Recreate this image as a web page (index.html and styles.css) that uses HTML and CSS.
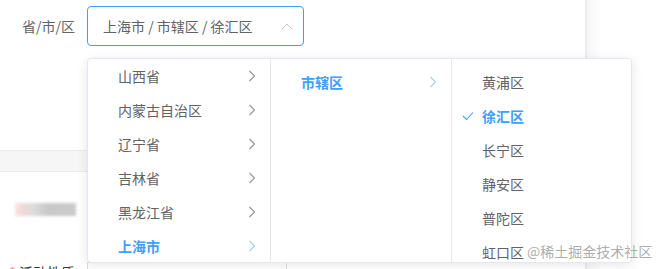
FILE: index.html
```html
<!DOCTYPE html>
<html lang="zh-CN">
<head>
<meta charset="utf-8">
<title>Cascader</title>
<link rel="stylesheet" href="styles.css">
</head>
<body>
<div class="page">
  <div class="card">
    <div class="form-row">
      <label class="form-label">省/市/区</label>
      <div class="cascader">
        <span class="cascader-value">上海市 / 市辖区 / 徐汇区</span>
        <svg class="caret" width="12" height="7" viewBox="0 0 12 7"><path d="M1 6 L6 1 L11 6" fill="none" stroke="#c0c4cc" stroke-width="1"/></svg>
      </div>
    </div>
    <div class="band"></div>
    <div class="blur-row"><span class="blur"></span></div>
    <div class="bottom-row">
      <span class="bottom-label"><span class="star">*</span> 活动性质</span>
      <div class="bottom-box"></div>
    </div>
  </div>
  <div class="shade"></div>

  <div class="dropdown">
    <ul class="menu menu-1">
      <li class="node">山西省<svg class="arrow" width="8" height="12" viewBox="0 0 8 12"><path d="M1.5 1 L6.5 6 L1.5 11" fill="none" stroke="#909399" stroke-width="1.1"/></svg></li>
      <li class="node">内蒙古自治区<svg class="arrow" width="8" height="12" viewBox="0 0 8 12"><path d="M1.5 1 L6.5 6 L1.5 11" fill="none" stroke="#909399" stroke-width="1.1"/></svg></li>
      <li class="node">辽宁省<svg class="arrow" width="8" height="12" viewBox="0 0 8 12"><path d="M1.5 1 L6.5 6 L1.5 11" fill="none" stroke="#909399" stroke-width="1.1"/></svg></li>
      <li class="node">吉林省<svg class="arrow" width="8" height="12" viewBox="0 0 8 12"><path d="M1.5 1 L6.5 6 L1.5 11" fill="none" stroke="#909399" stroke-width="1.1"/></svg></li>
      <li class="node">黑龙江省<svg class="arrow" width="8" height="12" viewBox="0 0 8 12"><path d="M1.5 1 L6.5 6 L1.5 11" fill="none" stroke="#909399" stroke-width="1.1"/></svg></li>
      <li class="node active">上海市<svg class="arrow" width="8" height="12" viewBox="0 0 8 12"><path d="M1.5 1 L6.5 6 L1.5 11" fill="none" stroke="#a0cfff" stroke-width="1.1"/></svg></li>
    </ul>
    <ul class="menu menu-2">
      <li class="node active">市辖区<svg class="arrow" width="8" height="12" viewBox="0 0 8 12"><path d="M1.5 1 L6.5 6 L1.5 11" fill="none" stroke="#a0cfff" stroke-width="1.1"/></svg></li>
    </ul>
    <ul class="menu menu-3">
      <li class="node">黄浦区</li>
      <li class="node active"><svg class="check" width="12" height="10" viewBox="0 0 12 10"><path d="M1 5 L4.5 8.5 L11 1.5" fill="none" stroke="#409eff" stroke-width="1.1"/></svg>徐汇区</li>
      <li class="node">长宁区</li>
      <li class="node">静安区</li>
      <li class="node">普陀区</li>
      <li class="node">虹口区</li>
    </ul>
  </div>
  <div class="watermark">@稀土掘金技术社区</div>
</div>
</body>
</html>
```

FILE: styles.css
```css
* { box-sizing: border-box; }
html, body {
  margin: 0;
  padding: 0;
  background: #fff;
  font-family: "Noto Sans CJK SC", "Helvetica Neue", sans-serif;
  font-size: 14px;
  color: #606266;
}
.page {
  position: relative;
  width: 660px;
  height: 269px;
  overflow: hidden;
  display: flex;
}
.card {
  width: 587px;
  height: 269px;
  border-right: 2px solid #ececec;
  display: flex;
  flex-direction: column;
  flex-shrink: 0;
}
.shade {
  width: 14px;
  height: 269px;
  background: linear-gradient(to right, #f6f6f6, #fff);
}
.form-row {
  display: flex;
  align-items: center;
  padding-top: 6px;
  height: 46px;
  flex-shrink: 0;
}
.form-label {
  width: 87px;
  text-align: right;
  padding-right: 12px;
  line-height: 40px;
}
.cascader {
  width: 217px;
  height: 40px;
  border: 1px solid #409eff;
  border-radius: 4px;
  padding: 0 15px;
  display: flex;
  align-items: center;
  justify-content: space-between;
}
.cascader-value { line-height: 38px; }
.caret { margin-right: -5px; }
.band {
  margin-top: 104px;
  height: 22px;
  flex-shrink: 0;
  background: #f6f6f6;
  border-top: 1px solid #ececec;
  border-bottom: 1px solid #ececec;
}
.blur-row {
  height: 90px;
  flex-shrink: 0;
  padding-top: 31px;
  padding-left: 15px;
}
.blur {
  display: block;
  width: 61px;
  height: 13px;
  background: linear-gradient(to right, #fbe3e3 0%, #f0d8d8 12%, #dcdcdc 30%, #c8c8c8 55%, #cacaca 100%);
  filter: blur(1.5px);
}
.bottom-row {
  display: flex;
  align-items: flex-start;
  height: 20px;
  flex-shrink: 0;
}
.bottom-label {
  width: 87px;
  text-align: right;
  padding-right: 12px;
  margin-top: 0;
  line-height: 20px;
  color: #333;
}
.star { color: #f56c6c; }
.bottom-box {
  width: 200px;
  height: 20px;
  border: 1px solid #dcdfe6;
  border-bottom: none;
}

.dropdown {
  position: absolute;
  left: 87px;
  top: 58px;
  display: flex;
  background: #fff;
  border: 1px solid #e4e7ed;
  border-radius: 4px;
  box-shadow: 0 2px 12px 0 rgba(0, 0, 0, 0.1);
  overflow: hidden;
}
.menu {
  list-style: none;
  margin: 0;
  padding: 6px 0;
  height: 203px;
  overflow: hidden;
  border-right: 1px solid #e4e7ed;
}
.menu-1 { width: 183px; padding-top: 0; }
.menu-2 { width: 181px; }
.menu-3 { width: 179px; border-right: none; }
.node {
  position: relative;
  height: 34px;
  line-height: 34px;
  padding: 0 30px 0 30px;
  color: #606266;
  white-space: nowrap;
}
.node.active {
  color: #409eff;
  font-weight: 700;
}
.arrow {
  position: absolute;
  right: 14px;
  top: 11px;
}
.check {
  position: absolute;
  left: 10px;
  top: 12px;
}
.watermark {
  position: absolute;
  left: 527px;
  top: 240px;
  font-size: 14px;
  line-height: 22px;
  color: rgba(150, 150, 150, 0.8);
  text-shadow: 0 0 1px rgba(255,255,255,0.9);
  white-space: nowrap;
}
```
